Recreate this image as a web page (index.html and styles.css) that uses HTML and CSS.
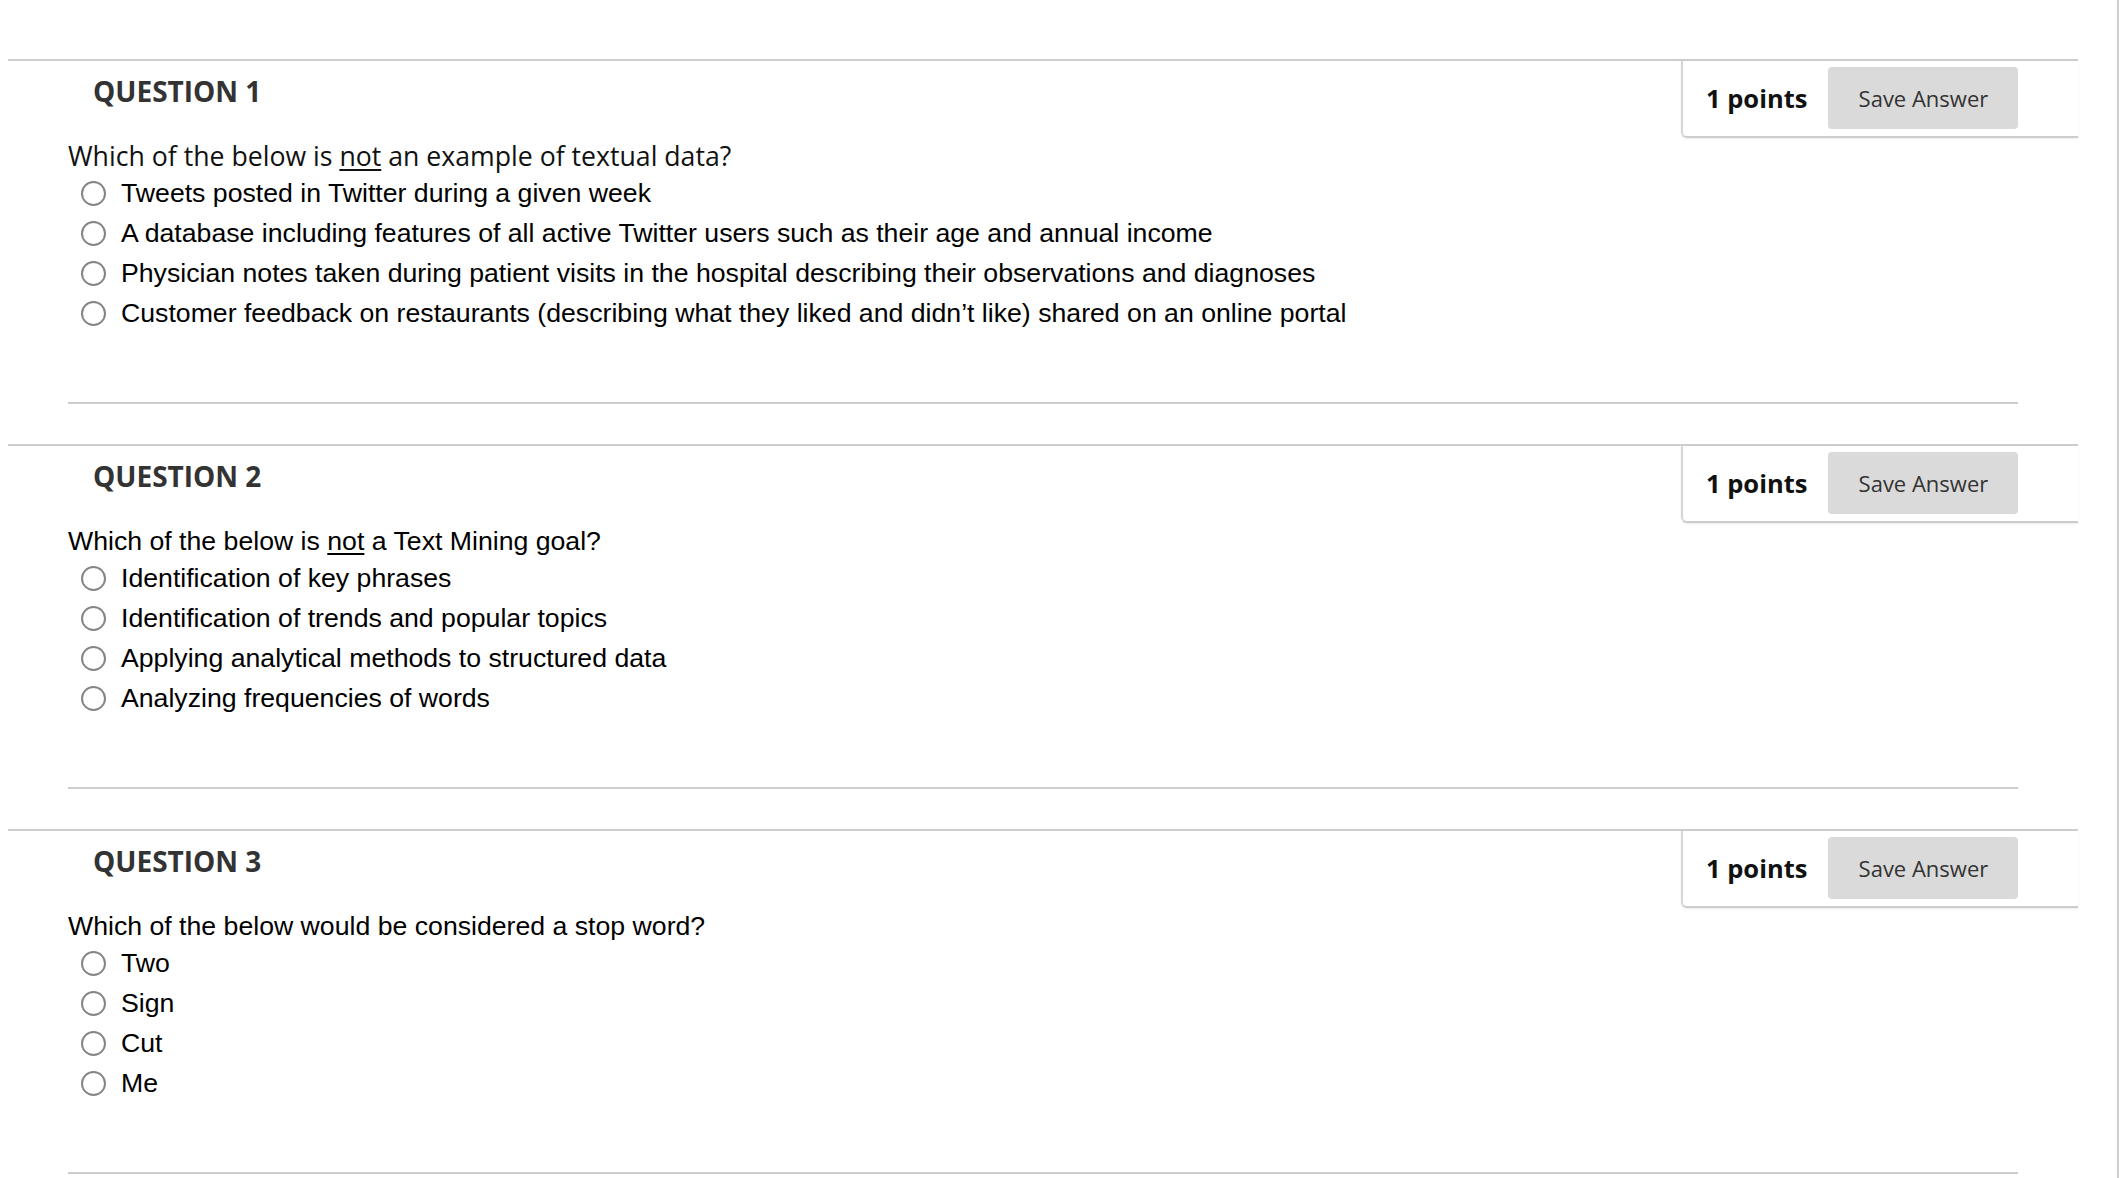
FILE: index.html
```html
<!DOCTYPE html>
<html lang="en">
<head>
<meta charset="utf-8">
<title>Quiz</title>
<link rel="stylesheet" href="styles.css">
</head>
<body>
<div class="page">
  <main class="content">
    <section class="question">
      <div class="q-head">
        <h3 class="q-title">QUESTION 1</h3>
        <div class="points-box">
          <span class="points">1 points</span>
          <button class="save-btn" type="button">Save Answer</button>
        </div>
      </div>
      <p class="q-text sans-open">Which of the below is <u>not</u> an example of textual data?</p>
      <ul class="options">
        <li class="option"><span class="radio"></span><span>Tweets posted in Twitter during a given week</span></li>
        <li class="option"><span class="radio"></span><span>A database including features of all active Twitter users such as their age and annual income</span></li>
        <li class="option"><span class="radio"></span><span>Physician notes taken during patient visits in the hospital describing their observations and diagnoses</span></li>
        <li class="option"><span class="radio"></span><span>Customer feedback on restaurants (describing what they liked and didn’t like) shared on an online portal</span></li>
      </ul>
      <hr class="q-sep">
    </section>

    <section class="question">
      <div class="q-head">
        <h3 class="q-title">QUESTION 2</h3>
        <div class="points-box">
          <span class="points">1 points</span>
          <button class="save-btn" type="button">Save Answer</button>
        </div>
      </div>
      <p class="q-text sans-arial">Which of the below is <u>not</u> a Text Mining goal?</p>
      <ul class="options">
        <li class="option"><span class="radio"></span><span>Identification of key phrases</span></li>
        <li class="option"><span class="radio"></span><span>Identification of trends and popular topics</span></li>
        <li class="option"><span class="radio"></span><span>Applying analytical methods to structured data</span></li>
        <li class="option"><span class="radio"></span><span>Analyzing frequencies of words</span></li>
      </ul>
      <hr class="q-sep">
    </section>

    <section class="question">
      <div class="q-head">
        <h3 class="q-title">QUESTION 3</h3>
        <div class="points-box">
          <span class="points">1 points</span>
          <button class="save-btn" type="button">Save Answer</button>
        </div>
      </div>
      <p class="q-text sans-arial">Which of the below would be considered a stop word?</p>
      <ul class="options">
        <li class="option"><span class="radio"></span><span>Two</span></li>
        <li class="option"><span class="radio"></span><span>Sign</span></li>
        <li class="option"><span class="radio"></span><span>Cut</span></li>
        <li class="option"><span class="radio"></span><span>Me</span></li>
      </ul>
      <hr class="q-sep">
    </section>
  </main>
  <div class="rail"></div>
</div>
</body>
</html>
```

FILE: styles.css
```css
html, body {
  margin: 0;
  padding: 0;
  background: #fff;
}

body {
  font-family: "Open Sans", "Liberation Sans", sans-serif;
  color: #111;
}

.page {
  display: flex;
  padding: 0 1px 0 8px;
  min-height: 100vh;
  box-sizing: border-box;
}

.content {
  flex: 1;
  margin-right: 39px;
  padding-top: 59px;
}

.rail {
  width: 2px;
  background: #cfcfcf;
  flex: none;
}

.question {
  border-top: 2px solid #cdcdcd;
  margin-bottom: 40px;
}

.q-head {
  display: flex;
  justify-content: space-between;
  align-items: flex-start;
  height: 79px;
}

.q-title {
  margin: 11px 0 0 85px;
  font-family: "Open Sans", sans-serif;
  font-weight: 700;
  font-size: 28px;
  line-height: 38px;
  color: #333;
}

.points-box {
  flex: none;
  display: flex;
  align-items: center;
  gap: 21px;
  width: 397px;
  height: 77px;
  box-sizing: border-box;
  padding: 0 0 2px 23px;
  border-left: 2px solid #d6d6d6;
  border-bottom: 2px solid #cdcdcd;
  border-bottom-left-radius: 6px;
  box-shadow: 0 1px 2px rgba(0, 0, 0, 0.08);
}

.points {
  flex: none;
  font-family: "Open Sans", sans-serif;
  font-weight: 700;
  font-size: 25.5px;
  color: #111;
  white-space: nowrap;
}

.save-btn {
  flex: none;
  width: 190px;
  height: 62px;
  border: none;
  border-radius: 4px;
  background: #dadada;
  font-family: "Open Sans", sans-serif;
  font-size: 22px;
  color: #333;
  padding: 0;
}

.q-text {
  margin: 0 0 0 60px;
  font-size: 26.67px;
  line-height: 32px;
  color: #111;
}

.sans-open {
  font-family: "Open Sans", sans-serif;
}

.sans-arial {
  font-family: "Liberation Sans", Arial, sans-serif;
  color: #000;
}

.q-text u {
  text-decoration-thickness: 2px;
  text-underline-offset: 3px;
}

.options {
  list-style: none;
  margin: 1px 0 0 73px;
  padding: 0;
}

.option {
  display: flex;
  align-items: center;
  gap: 15px;
  height: 40px;
  font-family: "Liberation Sans", Arial, sans-serif;
  font-size: 26.67px;
  line-height: 40px;
  color: #000;
}

.radio {
  flex: none;
  width: 25px;
  height: 25px;
  box-sizing: border-box;
  border: 2px solid #858585;
  border-radius: 50%;
  background: #fff;
}

.q-sep {
  margin: 69px 60px 0 60px;
  border: none;
  height: 2px;
  background: #cdcdcd;
}
```
